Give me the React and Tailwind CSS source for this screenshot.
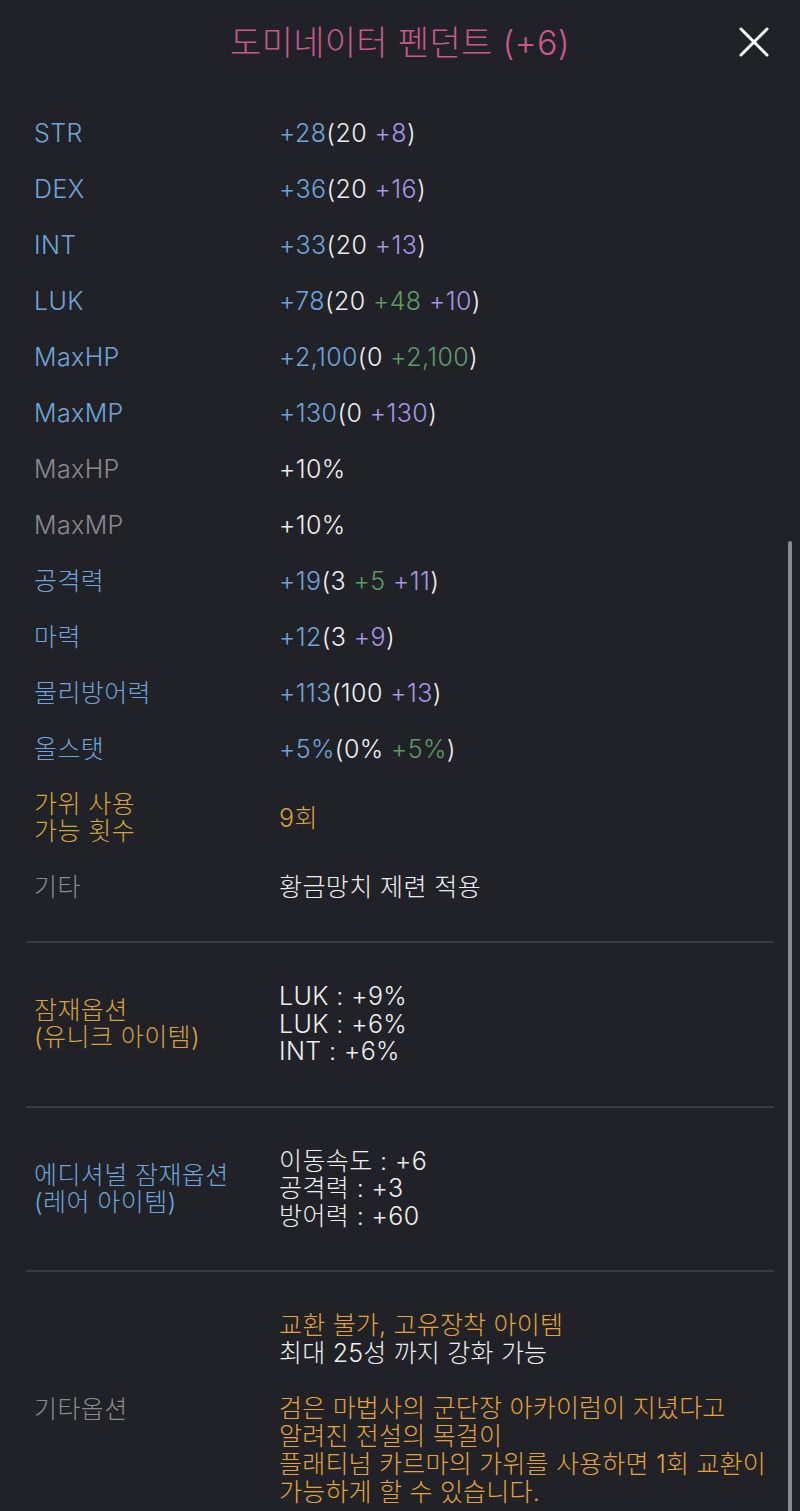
import React from "react";

const BLUE = "text-[#6fa5da]";
const PURPLE = "text-[#a497e4]";
const GREEN = "text-[#5e9b68]";
const WHITE = "text-[#efefef]";

const stats = [
  { label: "STR", parts: [["+28", BLUE], ["(20 ", WHITE], ["+8", PURPLE], [")", WHITE]] },
  { label: "DEX", parts: [["+36", BLUE], ["(20 ", WHITE], ["+16", PURPLE], [")", WHITE]] },
  { label: "INT", parts: [["+33", BLUE], ["(20 ", WHITE], ["+13", PURPLE], [")", WHITE]] },
  {
    label: "LUK",
    parts: [["+78", BLUE], ["(20 ", WHITE], ["+48", GREEN], [" ", WHITE], ["+10", PURPLE], [")", WHITE]],
  },
  { label: "MaxHP", parts: [["+2,100", BLUE], ["(0 ", WHITE], ["+2,100", GREEN], [")", WHITE]] },
  { label: "MaxMP", parts: [["+130", BLUE], ["(0 ", WHITE], ["+130", PURPLE], [")", WHITE]] },
  { label: "MaxHP", gray: true, parts: [["+10%", WHITE]] },
  { label: "MaxMP", gray: true, parts: [["+10%", WHITE]] },
  {
    label: "공격력",
    parts: [["+19", BLUE], ["(3 ", WHITE], ["+5", GREEN], [" ", WHITE], ["+11", PURPLE], [")", WHITE]],
  },
  { label: "마력", parts: [["+12", BLUE], ["(3 ", WHITE], ["+9", PURPLE], [")", WHITE]] },
  { label: "물리방어력", parts: [["+113", BLUE], ["(100 ", WHITE], ["+13", PURPLE], [")", WHITE]] },
  { label: "올스탯", parts: [["+5%", BLUE], ["(0% ", WHITE], ["+5%", GREEN], [")", WHITE]] },
];

function Row({ label, labelClass, children }) {
  return (
    <div className="grid grid-cols-[245px_1fr] items-center px-[8px] py-[14px] leading-[28px]">
      <div className={labelClass}>{label}</div>
      <div>{children}</div>
    </div>
  );
}

function Divider() {
  return <div className="h-[2px] bg-[#393a43]" />;
}

export default function App() {
  return (
    <div className="relative min-h-screen overflow-hidden bg-[#212227] font-['Inter','Noto_Sans_CJK_KR',sans-serif] font-light text-[25px] tracking-[0.4px]">
      <header className="relative flex h-[84px] items-center justify-center">
        <h1 className="text-[34px] font-light tracking-[0.3px] text-[#c9598b]">도미네이터 펜던트 (+6)</h1>
        <button className="absolute right-[30px] top-[26px] h-[32px] w-[32px]" aria-label="닫기">
          <svg viewBox="0 0 32 32" className="h-full w-full">
            <path d="M3 3L29 29M29 3L3 29" stroke="#ffffff" strokeWidth="3" strokeLinecap="round" />
          </svg>
        </button>
      </header>

      <div className="px-[26px] pt-[21px]">
        {stats.map((s, i) => (
          <Row key={i} label={s.label} labelClass={s.gray ? "text-[#8a8a8f]" : BLUE}>
            {s.parts.map(([t, c], j) => (
              <span key={j} className={`${c} whitespace-pre`}>
                {t}
              </span>
            ))}
          </Row>
        ))}

        <Row
          label={
            <>
              가위 사용
              <br />
              가능 횟수
            </>
          }
          labelClass="text-[#d5a53c] leading-[27px]"
        >
          <span className="text-[#d5a53c]">9회</span>
        </Row>

        <Row label="기타" labelClass="text-[#8a8a8f]">
          <span className={WHITE}>황금망치 제련 적용</span>
        </Row>

        <div className="mt-[26px]">
          <Divider />
        </div>

        <div className="grid grid-cols-[245px_1fr] items-center px-[8px] py-[40px]">
          <div className="leading-[27px] text-[#d8a23f]">
            잠재옵션
            <br />
            (유니크 아이템)
          </div>
          <div className={`${WHITE} leading-[27.5px]`}>
            <div>LUK : +9%</div>
            <div>LUK : +6%</div>
            <div>INT : +6%</div>
          </div>
        </div>

        <Divider />

        <div className="grid grid-cols-[245px_1fr] items-center px-[8px] py-[40px]">
          <div className={`${BLUE} leading-[27px]`}>
            에디셔널 잠재옵션
            <br />
            (레어 아이템)
          </div>
          <div className={`${WHITE} leading-[27.5px]`}>
            <div>이동속도 : +6</div>
            <div>공격력 : +3</div>
            <div>방어력 : +60</div>
          </div>
        </div>

        <Divider />

        <div className="grid grid-cols-[245px_1fr] items-center px-[8px] pt-[40px] pb-[40px]">
          <div className="text-[#8a8a8f]">기타옵션</div>
          <div className="whitespace-nowrap leading-[27.8px] tracking-[0.2px]">
            <div className="text-[#e6a23c]">교환 불가, 고유장착 아이템</div>
            <div className={WHITE}>최대 25성 까지 강화 가능</div>
            <div className="h-[27.8px]" />
            <div className="text-[#e6a23c]">
              <div>검은 마법사의 군단장 아카이럼이 지녔다고</div>
              <div>알려진 전설의 목걸이</div>
              <div>플래티넘 카르마의 가위를 사용하면 1회 교환이</div>
              <div>가능하게 할 수 있습니다.</div>
            </div>
          </div>
        </div>
      </div>

      <div className="absolute right-[8px] top-[541px] h-[1000px] w-[4px] rounded-full bg-[#8a8a8e]" />
    </div>
  );
}
